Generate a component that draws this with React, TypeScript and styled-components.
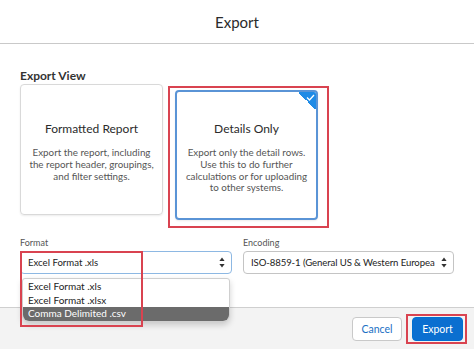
import { FC } from "react";
import styled, { createGlobalStyle } from "styled-components";

const GlobalStyle = createGlobalStyle`
  html, body {
    margin: 0;
    padding: 0;
    background: #ffffff;
  }
  body {
    font-family: Lato, "Open Sans", Arial, sans-serif;
    color: #1c1c1c;
  }
  * { box-sizing: border-box; }
`;

const Dialog = styled.div`
  width: 474px;
  height: 349px;
  display: flex;
  flex-direction: column;
  overflow: hidden;
  background: #fff;
`;

const Header = styled.header`
  height: 44px;
  flex-shrink: 0;
  display: flex;
  align-items: center;
  justify-content: center;
  border-bottom: 1px solid #c9c9c9;
  font-size: 15px;
  color: #2a2a2a;
`;

const Body = styled.main`
  flex: 1;
  padding: 24px 20px 0;
  display: flex;
  flex-direction: column;
`;

const SectionLabel = styled.div`
  font-size: 12px;
  font-weight: 700;
  line-height: 16px;
  color: #333;
`;

const CardRow = styled.div`
  position: relative;
  display: flex;
  align-items: flex-start;
  gap: 12px;
`;

const Card = styled.div<{ $selected?: boolean }>`
  position: relative;
  width: 143px;
  height: ${p => (p.$selected ? "130px" : "131px")};
  margin-top: ${p => (p.$selected ? "6px" : "0")};
  border: ${p => (p.$selected ? "2px solid #5a94d6" : "1px solid #d9d9d9")};
  border-radius: 4px;
  box-shadow: 0 1px 2px rgba(0, 0, 0, 0.08);
  display: flex;
  flex-direction: column;
  align-items: center;
  justify-content: flex-start;
  gap: 10px;
  padding: ${p => (p.$selected ? "29px" : "36px")} 2px 0;
  text-align: center;
  overflow: hidden;
`;

const CardTitle = styled.div`
  font-size: 12px;
  line-height: 16px;
  color: #2b2b2b;
`;

const CardText = styled.div`
  font-size: 9.8px;
  line-height: 11.8px;
  color: #555;
  white-space: nowrap;
`;

const Corner = styled.div`
  position: absolute;
  top: 0;
  right: 0;
  width: 18px;
  height: 18px;
  background: linear-gradient(225deg, #1f8be6 50%, transparent 50%);
  svg {
    position: absolute;
    top: 2px;
    right: 1px;
  }
`;

const Highlight = styled.div<{ $top: number; $left: number; $w: number; $h: number }>`
  position: absolute;
  top: ${p => p.$top}px;
  left: ${p => p.$left}px;
  width: ${p => p.$w}px;
  height: ${p => p.$h}px;
  border: 2.5px solid #d94350;
  pointer-events: none;
  z-index: 5;
`;

const Fields = styled.div`
  display: grid;
  grid-template-columns: 212px 211px;
  column-gap: 11px;
  margin-top: 17px;
`;

const Field = styled.div`
  position: relative;
  display: flex;
  flex-direction: column;
  gap: 2px;
`;

const FieldLabel = styled.label`
  font-size: 9px;
  line-height: 12px;
  color: #555;
`;

const SelectBox = styled.div<{ $focused?: boolean }>`
  height: 23px;
  border: 1px solid ${p => (p.$focused ? "#8db8e3" : "#c4c4c4")};
  border-radius: 4px;
  display: flex;
  align-items: center;
  padding: 0 6px 0 7px;
  gap: 4px;
  font-size: 9.6px;
  color: #222;
  background: #fff;
`;

const SelectValue = styled.span<{ $tight?: boolean }>`
  flex: 1;
  white-space: nowrap;
  overflow: hidden;
  letter-spacing: ${p => (p.$tight ? "-0.1px" : "0")};
`;

const Menu = styled.ul`
  position: absolute;
  top: 41px;
  left: 2px;
  width: 208px;
  margin: 0;
  padding: 1px 0 0;
  list-style: none;
  background: #fff;
  border: 1px solid #cfcfcf;
  border-radius: 3px 3px 7px 7px;
  box-shadow: 0 3px 6px rgba(0, 0, 0, 0.18);
  overflow: hidden;
  z-index: 4;
`;

const MenuItem = styled.li<{ $active?: boolean }>`
  height: 13.5px;
  line-height: 13.5px;
  padding-left: 5px;
  font-size: 10px;
  color: ${p => (p.$active ? "#fff" : "#222")};
  background: ${p => (p.$active ? "#6b6b6b" : "transparent")};
`;

const Footer = styled.footer`
  height: 42px;
  flex-shrink: 0;
  border-top: 1px solid #cfcfcf;
  background: #f3f3f3;
  display: flex;
  align-items: center;
  justify-content: flex-end;
  gap: 10px;
  padding: 0 11px 0 0;
`;

const ButtonSlot = styled.div`
  position: relative;
  display: flex;
`;

const Button = styled.button<{ $primary?: boolean }>`
  height: 24px;
  padding: 0;
  width: ${p => (p.$primary ? "51px" : "50px")};
  border-radius: 4px;
  font-family: inherit;
  font-size: 10.5px;
  border: 1px solid ${p => (p.$primary ? "#0070d2" : "#c9c9c9")};
  background: ${p => (p.$primary ? "#0b6fd0" : "#fff")};
  color: ${p => (p.$primary ? "#fff" : "#1a6fc4")};
`;

const Spinner: FC = () => (
  <svg width="6" height="11" viewBox="0 0 6 11">
    <path d="M3 0.5 L5.6 4 L0.4 4 Z" fill="#333" />
    <path d="M3 10.5 L5.6 7 L0.4 7 Z" fill="#333" />
  </svg>
);

const Check: FC = () => (
  <svg width="9" height="7" viewBox="0 0 9 7">
    <polyline points="1,3.5 3.5,6 8,1" fill="none" stroke="#fff" strokeWidth="1.3" />
  </svg>
);

export default function App() {
  return (
    <>
      <GlobalStyle />
      <Dialog>
        <Header>Export</Header>
        <Body>
          <SectionLabel>Export View</SectionLabel>
          <CardRow>
            <Card>
              <CardTitle>Formatted Report</CardTitle>
              <CardText>
                Export the report, including
                <br />
                the report header, groupings,
                <br />
                and filter settings.
              </CardText>
            </Card>
            <Card $selected>
              <Corner>
                <Check />
              </Corner>
              <CardTitle>Details Only</CardTitle>
              <CardText>
                Export only the detail rows.
                <br />
                Use this to do further
                <br />
                calculations or for uploading
                <br />
                to other systems.
              </CardText>
            </Card>
            <Highlight $top={2} $left={148} $w={161} $h={142} />
          </CardRow>
          <Fields>
            <Field>
              <FieldLabel>Format</FieldLabel>
              <SelectBox $focused>
                <SelectValue>Excel Format .xls</SelectValue>
                <Spinner />
              </SelectBox>
              <Menu>
                <MenuItem>Excel Format .xls</MenuItem>
                <MenuItem>Excel Format .xlsx</MenuItem>
                <MenuItem $active>Comma Delimited .csv</MenuItem>
              </Menu>
              <Highlight $top={14} $left={0} $w={123} $h={76} />
            </Field>
            <Field>
              <FieldLabel>Encoding</FieldLabel>
              <SelectBox>
                <SelectValue $tight>ISO-8859-1 (General US &amp; Western Europea</SelectValue>
                <Spinner />
              </SelectBox>
            </Field>
          </Fields>
        </Body>
        <Footer>
          <ButtonSlot>
            <Button>Cancel</Button>
          </ButtonSlot>
          <ButtonSlot>
            <Button $primary>Export</Button>
            <Highlight $top={-3} $left={-6} $w={61} $h={30} />
          </ButtonSlot>
        </Footer>
      </Dialog>
    </>
  );
}
